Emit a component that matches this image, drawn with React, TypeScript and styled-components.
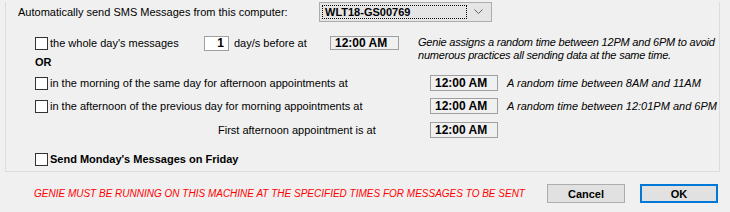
import React from 'react';
import styled, { createGlobalStyle } from 'styled-components';

const GlobalStyle = createGlobalStyle`
    body {
        margin: 0;
        background: #f0f0f0;
        font-family: "Liberation Sans", Arial, sans-serif;
        font-size: 11px;
        color: #000;
    }
`;

const Page = styled.div`
    width: 730px;
    height: 212px;
    overflow: hidden;
`;

const Group = styled.div`
    box-sizing: border-box;
    margin-left: 5px;
    width: 715px;
    height: 170px;
    border: 1px solid #dcdcdc;
    border-top: none;
`;

const Header = styled.div`
    display: flex;
    align-items: center;
    height: 20px;
    margin-top: 2px;
    padding-left: 12px;
`;

const HeaderLabel = styled.span`
    width: 301px;
    flex-shrink: 0;
    white-space: nowrap;
`;

const Combo = styled.div`
    box-sizing: border-box;
    display: flex;
    align-items: center;
    width: 173px;
    height: 20px;
    padding: 2px;
    background: #e5e5e5;
    border: 1px solid #acacac;
`;

const ComboValue = styled.div`
    box-sizing: border-box;
    flex: 1;
    height: 100%;
    display: flex;
    align-items: center;
    padding-left: 2px;
    border: 1px dotted #000;
    font-weight: bold;
`;

const Chevron = styled.div`
    width: 22px;
    display: flex;
    justify-content: center;
`;

const Options = styled.div`
    padding-left: 29px;
`;

const Row = styled.div<{ $top: number }>`
    display: flex;
    align-items: center;
    height: 16px;
    margin-top: ${p => p.$top}px;
`;

const Box = styled.span`
    box-sizing: border-box;
    width: 13px;
    height: 13px;
    background: #fff;
    border: 1px solid #333;
    flex-shrink: 0;
`;

const Label = styled.span<{ $w?: number; $pad?: number; $bold?: boolean }>`
    width: ${p => (p.$w ? `${p.$w}px` : 'auto')};
    padding-left: ${p => p.$pad ?? 2}px;
    font-weight: ${p => (p.$bold ? 'bold' : 'normal')};
    white-space: nowrap;
    flex-shrink: 0;
`;

const Field = styled.span<{ $w: number; $h: number; $white?: boolean; $align?: string }>`
    box-sizing: border-box;
    display: flex;
    align-items: center;
    justify-content: ${p => p.$align ?? 'flex-start'};
    width: ${p => p.$w}px;
    height: ${p => p.$h}px;
    padding: 0 4px;
    background: ${p => (p.$white ? '#fff' : '#f0f0f0')};
    border: 1px solid #a0a0a0;
    font-weight: bold;
    font-size: 12px;
    flex-shrink: 0;
`;

const Gap = styled.span<{ $w: number }>`
    width: ${p => p.$w}px;
    flex-shrink: 0;
`;

const Note = styled.span<{ $left: number }>`
    margin-left: ${p => p.$left}px;
    font-style: italic;
    line-height: 13px;
    white-space: nowrap;
`;

const NoteBlock = styled.div`
    align-self: flex-start;
    margin-top: 1px;
    margin-left: 19px;
    font-style: italic;
    line-height: 13px;
    letter-spacing: -0.2px;
    white-space: nowrap;
`;

const Or = styled.div`
    margin-top: 4px;
    height: 14px;
    line-height: 14px;
    font-weight: bold;
`;

const Footer = styled.div`
    display: flex;
    align-items: center;
    margin-top: 12px;
    height: 19px;
`;

const Warning = styled.span`
    width: 513px;
    padding-left: 34px;
    color: #ff0000;
    font-size: 10px;
    font-style: italic;
    white-space: nowrap;
    flex-shrink: 0;
`;

const Button = styled.button<{ $primary?: boolean }>`
    box-sizing: border-box;
    width: 78px;
    height: 19px;
    margin-right: 15px;
    padding: 0;
    background: #e1e1e1;
    border: ${p => (p.$primary ? '2px solid #0078d7' : '1px solid #adadad')};
    font-family: inherit;
    font-size: 11px;
    font-weight: bold;
    color: #000;
    flex-shrink: 0;
`;

export default function App() {
    return (
        <Page>
            <GlobalStyle />
            <Group>
                <Header>
                    <HeaderLabel>Automatically send SMS Messages from this computer:</HeaderLabel>
                    <Combo>
                        <ComboValue>WLT18-GS00769</ComboValue>
                        <Chevron>
                            <svg width="9" height="6" viewBox="0 0 9 6">
                                <polyline points="0.5,0.5 4.5,4.5 8.5,0.5" fill="none" stroke="#606060" strokeWidth="1" />
                            </svg>
                        </Chevron>
                    </Combo>
                </Header>
                <Options>
                    <Row $top={13}>
                        <Box />
                        <Label $w={154}>the whole day's messages</Label>
                        <Field $w={25} $h={15} $white $align="flex-end">1</Field>
                        <Label $w={96} $pad={5}>day/s before at</Label>
                        <Field $w={69} $h={14}>12:00 AM</Field>
                        <NoteBlock>
                            Genie assigns a random time between 12PM and 6PM to avoid
                            <br />
                            numerous practices all sending data at the same time.
                        </NoteBlock>
                    </Row>
                    <Or>OR</Or>
                    <Row $top={6}>
                        <Box />
                        <Label $w={380}>in the morning of the same day for afternoon appointments at</Label>
                        <Field $w={68} $h={16}>12:00 AM</Field>
                        <Note $left={9}>A random time between 8AM and 11AM</Note>
                    </Row>
                    <Row $top={7}>
                        <Box />
                        <Label $w={380}>in the afternoon of the previous day for morning appointments at</Label>
                        <Field $w={68} $h={16}>12:00 AM</Field>
                        <Note $left={9}>A random time between 12:01PM and 6PM</Note>
                    </Row>
                    <Row $top={8}>
                        <Gap $w={183} />
                        <Label $w={212} $pad={0}>First afternoon appointment is at</Label>
                        <Field $w={68} $h={16}>12:00 AM</Field>
                    </Row>
                    <Row $top={13}>
                        <Box />
                        <Label $bold>Send Monday's Messages on Friday</Label>
                    </Row>
                </Options>
            </Group>
            <Footer>
                <Warning>GENIE MUST BE RUNNING ON THIS MACHINE AT THE SPECIFIED TIMES FOR MESSAGES TO BE SENT</Warning>
                <Button>Cancel</Button>
                <Button $primary>OK</Button>
            </Footer>
        </Page>
    );
}
